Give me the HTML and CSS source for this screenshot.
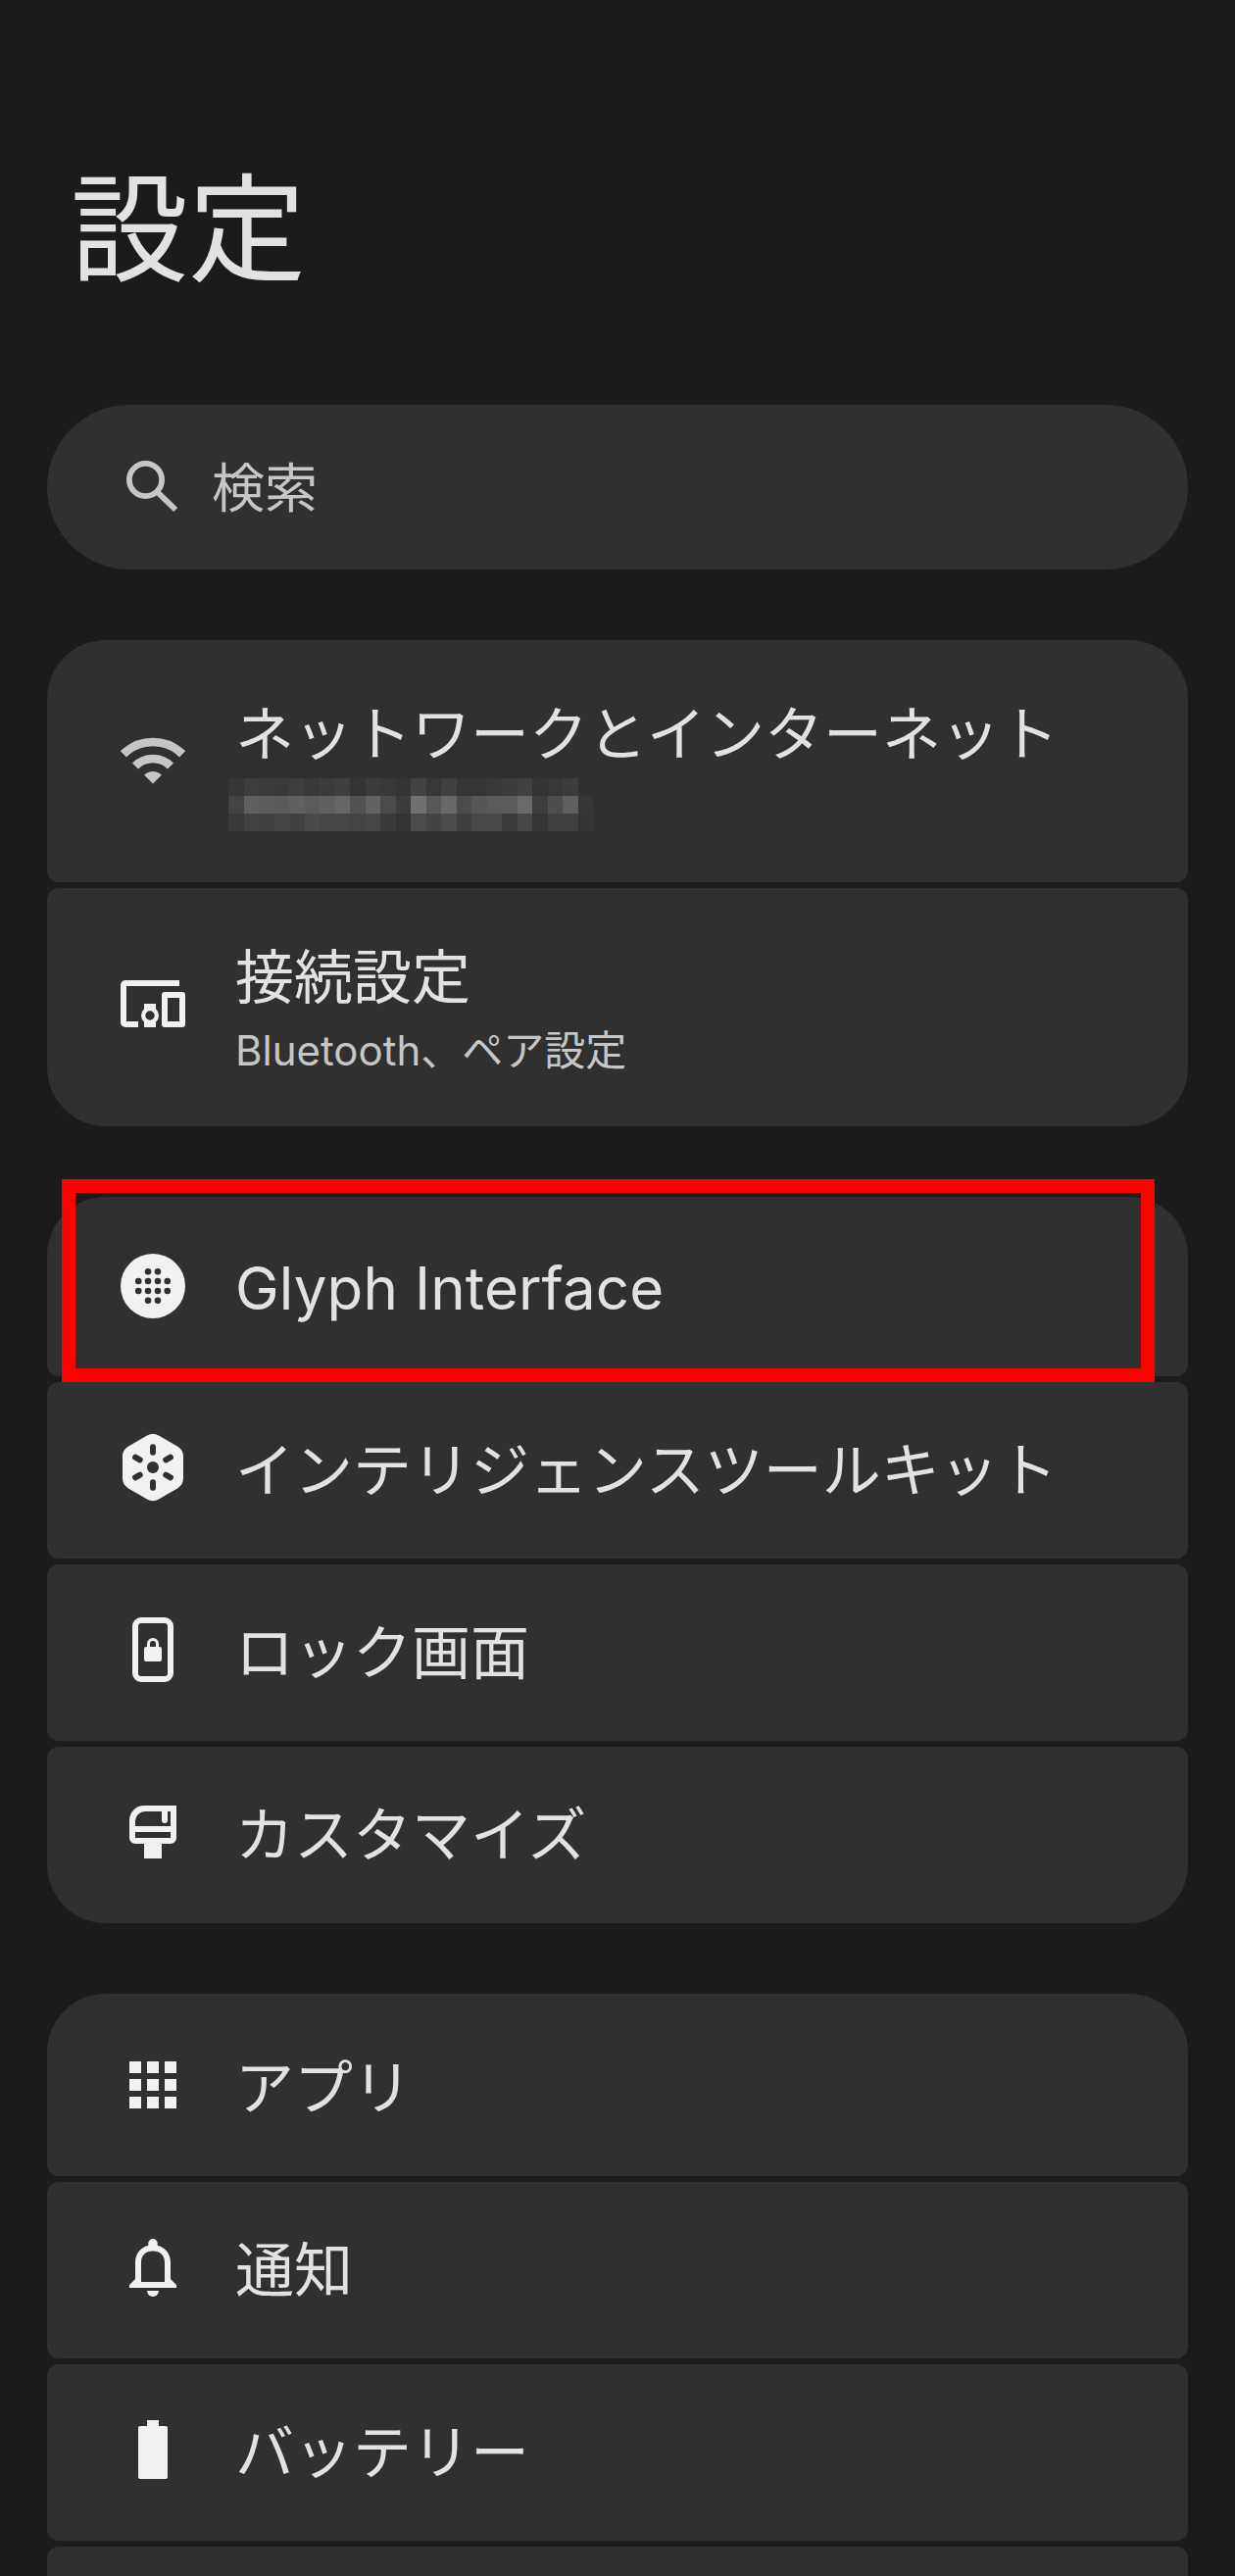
FILE: index.html
```html
<!DOCTYPE html>
<html lang="ja">
<head>
<meta charset="utf-8">
<title>設定</title>
<link rel="stylesheet" href="styles.css">
</head>
<body>
<main class="screen">
  <h1 class="title">設定</h1>

  <div class="search">
    <svg class="search-icon" viewBox="0 0 72 72"><circle cx="28.5" cy="28.5" r="16.6"/><path d="M40 40.500L59.200 59"/></svg>
    <span class="search-text">検索</span>
  </div>

  <section class="group">
    <div class="row row-tall">
      <svg class="icon icon-dim" viewBox="0 0 72 72">
        <g fill="none" stroke="currentColor" stroke-width="8.6">
          <path d="M5.900 29.400A42.600 42.600 0 0 1 66.100 29.400"/>
          <path d="M18 41.500A25.500 25.500 0 0 1 54 41.500"/>
        </g>
        <path d="M36 59.500L27.200 50.700A12.500 12.500 0 0 1 44.800 50.700Z"/>
      </svg>
      <div class="texts">
        <span class="label">ネットワークとインターネット</span>
        <svg class="mosaic" viewBox="0 0 24 3" preserveAspectRatio="none" shape-rendering="crispEdges"></svg>
      </div>
    </div>
    <div class="row row-sub">
      <svg class="icon" viewBox="0 0 72 72">
        <path d="M63 12H8a5 5 0 0 0-5 5V55a5 5 0 0 0 5 5H21V54H9V18H63Z"/>
        <path fill-rule="evenodd" d="M48 24H66a3 3 0 0 1 3 3V57a3 3 0 0 1-3 3H48a3 3 0 0 1-3-3V27a3 3 0 0 1 3-3ZM51 30V54H63V30Z"/>
        <path fill-rule="evenodd" d="M27 36H39V41.300A9 9 0 0 1 39 54.700V60H27V54.700A9 9 0 0 1 27 41.300ZM33 43.300A4.700 4.700 0 1 0 33 52.700A4.700 4.700 0 1 0 33 43.300Z"/>
      </svg>
      <div class="texts">
        <span class="label">接続設定</span>
        <span class="summary">Bluetooth、ペア設定</span>
      </div>
    </div>
  </section>

  <section class="group">
    <div class="row row-glyph">
      <svg class="icon" viewBox="0 0 72 72">
        <circle cx="36" cy="36" r="33"/>
        <g class="cut">
          <circle cx="31.050" cy="21.200" r="3.300"/><circle cx="40.950" cy="21.200" r="3.300"/>
          <circle cx="21.200" cy="31.050" r="3.300"/><circle cx="31.050" cy="31.050" r="3.300"/><circle cx="40.950" cy="31.050" r="3.300"/><circle cx="50.800" cy="31.050" r="3.300"/>
          <circle cx="21.200" cy="40.950" r="3.300"/><circle cx="31.050" cy="40.950" r="3.300"/><circle cx="40.950" cy="40.950" r="3.300"/><circle cx="50.800" cy="40.950" r="3.300"/>
          <circle cx="31.050" cy="50.800" r="3.300"/><circle cx="40.950" cy="50.800" r="3.300"/>
        </g>
      </svg>
      <span class="label latin">Glyph Interface</span>
      <div class="highlight"></div>
    </div>
    <div class="row">
      <svg class="icon" viewBox="0 0 72 72">
        <path d="M36 14L55 25V47L36 58L17 47V25Z" stroke="currentColor" stroke-width="24" stroke-linejoin="round"/>
        <circle class="cut" cx="36" cy="36" r="6"/>
        <g class="spokes">
          <path d="M36 15.300V20.700"/>
          <path d="M36 15.300V20.700" transform="rotate(60 36 36)"/>
          <path d="M36 15.300V20.700" transform="rotate(120 36 36)"/>
          <path d="M36 15.300V20.700" transform="rotate(180 36 36)"/>
          <path d="M36 15.300V20.700" transform="rotate(240 36 36)"/>
          <path d="M36 15.300V20.700" transform="rotate(300 36 36)"/>
        </g>
      </svg>
      <span class="label">インテリジェンスツールキット</span>
    </div>
    <div class="row">
      <svg class="icon" viewBox="0 0 72 72">
        <rect x="18" y="6" width="36" height="60" rx="6" fill="none" stroke="currentColor" stroke-width="6" transform="translate(0 0)"/>
        <rect x="27" y="33" width="18" height="15" rx="2"/>
        <path d="M31.500 34V30a4.500 4.500 0 0 1 9 0V34" fill="none" stroke="currentColor" stroke-width="3"/>
      </svg>
      <span class="label">ロック画面</span>
    </div>
    <div class="row">
      <svg class="icon" viewBox="0 0 72 72">
        <path fill-rule="evenodd" d="M27 9H60V42a6 6 0 0 1-6 6H45V63H27V48H18a6 6 0 0 1-6-6V24A15 15 0 0 1 27 9ZM28 15A10 10 0 0 0 18 25V30H54V15H51V24A3 3 0 0 1 45 24V15ZM18 36V42H54V36Z"/>
      </svg>
      <span class="label">カスタマイズ</span>
    </div>
  </section>

  <section class="group">
    <div class="row row-apps">
      <svg class="icon" viewBox="0 0 72 72">
        <path d="M12 12h12v12H12ZM30 12h12v12H30ZM48 12h12v12H48ZM12 30h12v12H12ZM30 30h12v12H30ZM48 30h12v12H48ZM12 48h12v12H12ZM30 48h12v12H30ZM48 48h12v12H48Z"/>
      </svg>
      <span class="label">アプリ</span>
    </div>
    <div class="row">
      <svg class="icon" viewBox="0 0 72 72">
        <path fill-rule="evenodd" d="M31.300 13.700V11.700A4.700 4.700 0 0 1 40.700 11.700V13.700C49 16 54 22.500 54 31V48L60 54V57H12V54L18 48V31C18 22.500 23 16 31.300 13.700ZM24 51H48V31C48 24 43.500 19.500 36 19.500S24 24 24 31Z"/>
        <path d="M30 60H42A6 6 0 0 1 30 60Z"/>
      </svg>
      <span class="label">通知</span>
    </div>
    <div class="row">
      <svg class="icon" viewBox="0 0 72 72">
        <path d="M30 6H42V12H49a2 2 0 0 1 2 2V64a2 2 0 0 1-2 2H23a2 2 0 0 1-2-2V14a2 2 0 0 1 2-2H30Z"/>
      </svg>
      <span class="label">バッテリー</span>
    </div>
    <div class="row"></div>
  </section>
</main>
<script src="mosaic.js"></script>
</body>
</html>
```
FILE: styles.css
```css
* {
  box-sizing: border-box;
}

body {
  margin: 0;
  background: #1b1b1b;
  color: #e2e2e2;
  font-family: Inter, "Noto Sans CJK JP", sans-serif;
}

.screen {
  width: 1260px;
  height: 2628px;
  padding: 157px 48px 0;
  overflow: hidden;
}

.title {
  height: 256px;
  margin: 0;
  padding-left: 24px;
  font-size: 120px;
  font-weight: 400;
  line-height: 156px;
}

.search {
  display: flex;
  align-items: center;
  height: 168px;
  margin-bottom: 72px;
  padding-left: 72px;
  border-radius: 84px;
  background: #303030;
  color: #c6c6c6;
}

.search-icon {
  width: 72px;
  height: 72px;
  margin-right: 24px;
  fill: none;
  stroke: currentColor;
  stroke-width: 5.8;
}

.search-text {
  padding-top: 4px;
  font-size: 54px;
  line-height: 72px;
}

.group {
  display: flex;
  flex-direction: column;
  gap: 6px;
  margin-bottom: 72px;
}

.row {
  position: relative;
  display: flex;
  flex-shrink: 0;
  align-items: center;
  height: 180px;
  padding: 0 72px 6px;
  border-radius: 12px;
  background: #303030;
}

.row:first-child {
  padding-bottom: 0;
  border-top-left-radius: 60px;
  border-top-right-radius: 60px;
}

.row:last-child {
  border-bottom-left-radius: 60px;
  border-bottom-right-radius: 60px;
}

.row-tall {
  height: 247px;
}

.row-sub {
  height: 243px;
}

.row.row-glyph {
  height: 183px;
  padding-bottom: 1px;
}

.row-apps {
  height: 186px;
}

.icon {
  flex-shrink: 0;
  width: 72px;
  height: 72px;
  margin-right: 48px;
  color: #f1f1f1;
  fill: currentColor;
}

.row-tall .icon,
.row-sub .icon {
  margin-bottom: 1px;
}

.icon-dim {
  color: #c6c6c6;
}

.cut {
  fill: #303030;
}

.spokes {
  stroke: #303030;
  stroke-width: 6;
  stroke-linecap: round;
}

.texts {
  display: flex;
  flex-direction: column;
  padding-top: 12px;
}

.row-tall .texts {
  padding-top: 13px;
}

.label {
  padding-top: 6px;
  font-size: 60px;
  line-height: 72px;
  white-space: nowrap;
}

.latin {
  padding-top: 4px;
  letter-spacing: 0.1px;
}

.texts .label {
  padding-top: 0;
}

.summary {
  margin-bottom: -1px;
  padding-top: 9px;
  color: #c6c6c6;
  font-size: 42px;
  line-height: 60px;
}

.mosaic {
  width: 372px;
  height: 54px;
  margin: 9px 0 5px -7px;
}

.highlight {
  position: absolute;
  top: -18px;
  left: 15px;
  width: 1115px;
  height: 207px;
  border: 14px solid #ff0000;
}
```
FILE: mosaic.js
```js
// Grey levels of the pixelated network name, one string per row.
const rows = [
  "36 3e 3b 39 3e 38 3c 3f 34 3b 38 34 43 37 40 35 35 37 3d 41 34 37 3c 30",
  "44 5f 5b 5a 60 5b 60 67 52 62 4b 3c 70 58 68 4b 56 5b 5c 6a 3e 4e 5f 35",
  "39 42 41 44 41 49 46 46 44 46 3a 33 4a 43 4b 3f 48 48 3d 47 35 40 40 34"
];
const mosaic = document.querySelector(".mosaic");
rows.forEach((row, y) => {
  row.split(" ").forEach((level, x) => {
    const cell = document.createElementNS("http://www.w3.org/2000/svg", "rect");
    cell.setAttribute("x", x);
    cell.setAttribute("y", y);
    cell.setAttribute("width", 1);
    cell.setAttribute("height", 1);
    cell.setAttribute("fill", "#" + level + level + level);
    mosaic.appendChild(cell);
  });
});
```
